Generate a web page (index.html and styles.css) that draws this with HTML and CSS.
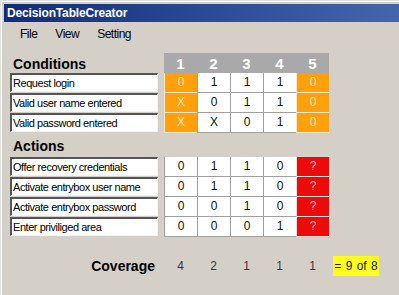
FILE: index.html
```html
<!DOCTYPE html>
<html lang="en">
<head>
    <meta charset="UTF-8">
    <meta name="viewport" content="width=device-width, initial-scale=1.0">
    <title>DecisionTableCreator</title>
    <link rel="stylesheet" href="styles.css">
</head>
<body>

  <div class="window">
    <div class="titlebar">DecisionTableCreator</div>

    <div class="menubar">
        <span>File</span>
        <span>View</span>
        <span>Setting</span>
    </div>

    <div class="content">
      <div class="table">
        <div class="heading">Conditions</div>
        <div class="num">1</div>
        <div class="num">2</div>
        <div class="num">3</div>
        <div class="num">4</div>
        <div class="num">5</div>

        <div class="label">Request login</div>
        <div class="cell on">0</div>
        <div class="cell">1</div>
        <div class="cell">1</div>
        <div class="cell">1</div>
        <div class="cell on">0</div>

        <div class="label">Valid user name entered</div>
        <div class="cell on">X</div>
        <div class="cell">0</div>
        <div class="cell">1</div>
        <div class="cell">1</div>
        <div class="cell on">0</div>

        <div class="label">Valid password entered</div>
        <div class="cell on">X</div>
        <div class="cell">X</div>
        <div class="cell">0</div>
        <div class="cell">1</div>
        <div class="cell on">0</div>

        <div class="heading actions">Actions</div>

        <div class="label">Offer recovery credentials</div>
        <div class="cell">0</div>
        <div class="cell">1</div>
        <div class="cell">1</div>
        <div class="cell">0</div>
        <div class="cell err">?</div>

        <div class="label">Activate entrybox user name</div>
        <div class="cell">0</div>
        <div class="cell">1</div>
        <div class="cell">1</div>
        <div class="cell">0</div>
        <div class="cell err">?</div>

        <div class="label">Activate entrybox password</div>
        <div class="cell">0</div>
        <div class="cell">0</div>
        <div class="cell">1</div>
        <div class="cell">0</div>
        <div class="cell err">?</div>

        <div class="label">Enter priviliged area</div>
        <div class="cell">0</div>
        <div class="cell">0</div>
        <div class="cell">0</div>
        <div class="cell">1</div>
        <div class="cell err">?</div>
      </div>

      <div class="coverage">
        <div class="cov-title">Coverage</div>
        <div class="count">4</div>
        <div class="count">2</div>
        <div class="count">1</div>
        <div class="count">1</div>
        <div class="count">1</div>
        <div class="total">= 9 of 8</div>
      </div>
    </div>
  </div>

</body>
</html>
```

FILE: styles.css
```css
body {
    margin: 0;
    background-color: #d4d0c8;
    font-family: "Liberation Sans", Arial, sans-serif;
    font-size: 11px;
    letter-spacing: -0.45px;
    overflow: hidden;
}

.window {
    height: 295px;
    border-top: 1px solid #e4e2dc;
    border-left: 1px solid #e4e2dc;
    box-shadow: inset 1px 1px #ffffff;
    padding: 3px 0 0 3px;
    box-sizing: border-box;
}

.titlebar {
    height: 18px;
    line-height: 18px;
    padding-left: 3px;
    background: linear-gradient(to right, #112c78, #2a4a96 50%, #4566ac);
    color: #ffffff;
    font-weight: bold;
    font-size: 12px;
    letter-spacing: -0.15px;
}

.menubar {
    display: flex;
    gap: 18px;
    height: 24px;
    align-items: center;
    padding-left: 16px;
    font-size: 12px;
    letter-spacing: -0.5px;
    color: #000000;
}

.content {
    padding: 7px 0 0 6px;
}

/* the main grid: label column + 5 rule columns */
.table {
    display: grid;
    grid-template-columns: 154px repeat(5, 33px);
}

.heading {
    height: 20px;
    font-weight: bold;
    font-size: 14px;
    letter-spacing: 0;
    padding-left: 3px;
    line-height: 22px;
    color: #000000;
}

.heading.actions {
    grid-column: 1 / -1;
    height: 24px;
    line-height: 27px;
}

.num {
    height: 20px;
    background-color: #a9a9a9;
    color: #ffffff;
    font-weight: bold;
    font-size: 15px;
    letter-spacing: 0;
    text-align: center;
    line-height: 21px;
}

.label {
    width: 148px;
    height: 19px;
    margin-bottom: 1px;
    box-sizing: border-box;
    background-color: #ffffff;
    border-top: 2px solid #555555;
    border-left: 2px solid #555555;
    border-right: 1px solid #f4f4f4;
    border-bottom: 1px solid #f4f4f4;
    padding-left: 1px;
    line-height: 16px;
    white-space: nowrap;
    overflow: hidden;
    color: #000000;
}

.cell {
    height: 20px;
    box-sizing: border-box;
    background-color: #ffffff;
    border-left: 1px solid #a0a0a0;
    border-bottom: 1px solid #a0a0a0;
    text-align: center;
    font-size: 12px;
    letter-spacing: 0;
    line-height: 19px;
    color: #111111;
}

.cell.on {
    background-color: #ffa00c;
    border-color: #f6e7c8;
    color: #ffe9b8;
}

.cell.err {
    background-color: #ec0a0a;
    border-color: #f6dede;
    color: #ffc4c4;
}

.coverage {
    display: grid;
    grid-template-columns: 154px repeat(5, 33px) 50px;
    align-items: center;
    height: 20px;
    margin-top: 19px;
}

.cov-title {
    font-weight: bold;
    font-size: 14px;
    letter-spacing: 0;
    text-align: right;
    padding-right: 9px;
}

.count {
    text-align: center;
    font-size: 12px;
    letter-spacing: 0;
    color: #3a3340;
}

.total {
    margin-left: 4px;
    height: 20px;
    line-height: 20px;
    background-color: #ffff1e;
    text-align: center;
    font-size: 12px;
    letter-spacing: 0;
    word-spacing: 1px;
    color: #222222;
}
```
